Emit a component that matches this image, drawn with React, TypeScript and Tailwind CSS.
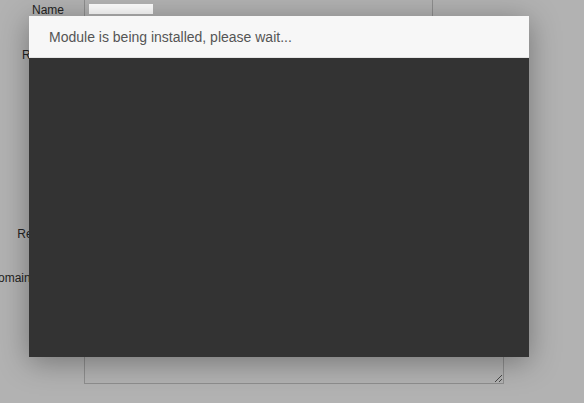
export default function App() {
  return (
    <div className="relative w-[584px] h-[403px] overflow-hidden bg-white text-[12px] text-[#333] font-['Liberation_Sans',Arial,sans-serif]">
      {/* Form behind the dialog */}
      <div className="flex flex-col">
        <div className="flex items-center gap-5 h-[28px] -mt-[4px]">
          <label className="w-[64px] shrink-0 text-right">Name</label>
          <input className="w-[349px] h-[28px] border border-[#ccc] px-1" />
        </div>
        <div className="flex items-center gap-5 h-[28px] mt-[17px]">
          <label className="w-[64px] shrink-0 text-right whitespace-nowrap">Remark</label>
          <input className="w-[349px] h-[28px] border border-[#ccc]" />
        </div>
        <div className="flex items-center gap-5 h-[28px] mt-[151px]">
          <label className="w-[64px] shrink-0 text-right whitespace-nowrap flex justify-end">
            <span>Rewrites</span>
          </label>
          <input className="w-[349px] h-[28px] border border-[#ccc]" />
        </div>
        <div className="flex items-start gap-5 mt-[21px]">
          <label className="w-[64px] shrink-0 text-right whitespace-nowrap flex justify-end">
            <span>Domain name</span>
          </label>
          <textarea className="w-[420px] h-[115px] border border-[#ccc]" />
        </div>
      </div>

      {/* Backdrop */}
      <div className="absolute inset-0 bg-black/30" />

      {/* Redacted value */}
      <div className="absolute left-[89px] top-[4px] w-[64px] h-[10px] bg-white" />

      {/* Dialog */}
      <div className="absolute left-[29px] top-[16px] w-[500px] h-[341px] flex flex-col shadow-[0_5px_28px_rgba(0,0,0,0.35)]">
        <div className="h-[42px] shrink-0 flex items-center px-5 pt-[1px] bg-[#f7f7f7] border-b border-[#e5e5e5]">
          <span className="text-[14px] text-[#555]">Module is being installed, please wait...</span>
        </div>
        <div className="flex-1 bg-[#333]" />
      </div>
    </div>
  )
}
